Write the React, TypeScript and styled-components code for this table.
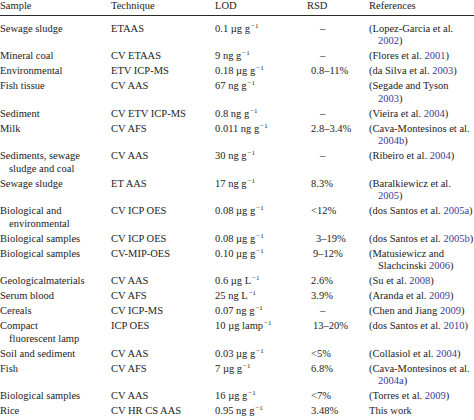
import React from "react";
import styled, { createGlobalStyle } from "styled-components";

type Ref = { pre: string; year?: string; post?: string };

interface RowData {
	sample: string[];
	technique: string;
	lod: string;
	unit: string;
	rsd: string;
	rsdIndent?: number;
	refs: Ref[];
}

const rows: RowData[] = [
	{ sample: ["Sewage sludge"], technique: "ETAAS", lod: "0.1 µg g", unit: "−1", rsd: "–", rsdIndent: 9, refs: [{ pre: "(Lopez-Garcia et al." }, { pre: "", year: "2002", post: ")" }] },
	{ sample: ["Mineral coal"], technique: "CV ETAAS", lod: "9 ng g", unit: "−1", rsd: "–", rsdIndent: 9, refs: [{ pre: "(Flores et al. ", year: "2001", post: ")" }] },
	{ sample: ["Environmental"], technique: "ETV ICP-MS", lod: "0.18 µg g", unit: "−1", rsd: "0.8–11%", refs: [{ pre: "(da Silva et al. ", year: "2003", post: ")" }] },
	{ sample: ["Fish tissue"], technique: "CV AAS", lod: "67 ng g", unit: "−1", rsd: "", refs: [{ pre: "(Segade and Tyson" }, { pre: "", year: "2003", post: ")" }] },
	{ sample: ["Sediment"], technique: "CV ETV ICP-MS", lod: "0.8 ng g", unit: "−1", rsd: "–", rsdIndent: 9, refs: [{ pre: "(Vieira et al. ", year: "2004", post: ")" }] },
	{ sample: ["Milk"], technique: "CV AFS", lod: "0.011 ng g", unit: "−1", rsd: "2.8–3.4%", refs: [{ pre: "(Cava-Montesinos et al." }, { pre: "", year: "2004b", post: ")" }] },
	{ sample: ["Sediments, sewage", "sludge and coal"], technique: "CV AAS", lod: "30 ng g", unit: "−1", rsd: "–", rsdIndent: 9, refs: [{ pre: "(Ribeiro et al. ", year: "2004", post: ")" }] },
	{ sample: ["Sewage sludge"], technique: "ET AAS", lod: "17 ng g", unit: "−1", rsd: "8.3%", refs: [{ pre: "(Baralkiewicz et al." }, { pre: "", year: "2005", post: ")" }] },
	{ sample: ["Biological and", "environmental"], technique: "CV ICP OES", lod: "0.08 µg g", unit: "−1", rsd: "<12%", refs: [{ pre: "(dos Santos et al. ", year: "2005a", post: ")" }] },
	{ sample: ["Biological samples"], technique: "CV ICP OES", lod: "0.08 µg g", unit: "−1", rsd: "3–19%", rsdIndent: 5, refs: [{ pre: "(dos Santos et al. ", year: "2005b", post: ")" }] },
	{ sample: ["Biological samples"], technique: "CV-MIP-OES", lod: "0.10 µg g", unit: "−1", rsd: "9–12%", rsdIndent: 2, refs: [{ pre: "(Matusiewicz and" }, { pre: "Slachcinski ", year: "2006", post: ")" }] },
	{ sample: ["Geologicalmaterials"], technique: "CV AAS", lod: "0.6 µg L", unit: "−1", rsd: "2.6%", refs: [{ pre: "(Su et al. ", year: "2008", post: ")" }] },
	{ sample: ["Serum blood"], technique: "CV AFS", lod: "25 ng L", unit: "−1", rsd: "3.9%", refs: [{ pre: "(Aranda et al. ", year: "2009", post: ")" }] },
	{ sample: ["Cereals"], technique: "CV ICP-MS", lod: "0.07 ng g", unit: "−1", rsd: "–", rsdIndent: 9, refs: [{ pre: "(Chen and Jiang ", year: "2009", post: ")" }] },
	{ sample: ["Compact", "fluorescent lamp"], technique: "ICP OES", lod: "10 µg lamp", unit: "−1", rsd: "13–20%", rsdIndent: 2, refs: [{ pre: "(dos Santos et al. ", year: "2010", post: ")" }] },
	{ sample: ["Soil and sediment"], technique: "CV AAS", lod: "0.03 µg g", unit: "−1", rsd: "<5%", refs: [{ pre: "(Collasiol et al. ", year: "2004", post: ")" }] },
	{ sample: ["Fish"], technique: "CV AFS", lod: "7 µg g", unit: "−1", rsd: "6.8%", refs: [{ pre: "(Cava-Montesinos et al." }, { pre: "", year: "2004a", post: ")" }] },
	{ sample: ["Biological samples"], technique: "CV AAS", lod: "16 µg g", unit: "−1", rsd: "<7%", refs: [{ pre: "(Torres et al. ", year: "2009", post: ")" }] },
	{ sample: ["Rice"], technique: "CV HR CS AAS", lod: "0.95 ng g", unit: "−1", rsd: "3.48%", refs: [{ pre: "This work" }] },
];

const App = () => {
	return (
		<>
			<GlobalStyle />
			<Page>
				<HeaderRow>
					<HeadCell>Sample</HeadCell>
					<HeadCell>Technique</HeadCell>
					<HeadCell>LOD</HeadCell>
					<HeadCell>RSD</HeadCell>
					<HeadCell>References</HeadCell>
				</HeaderRow>
				<Body>
					{rows.map((row, i) => (
						<Row key={i}>
							<Cell>
								{row.sample.map((line, j) => (
									<Line key={j} $cont={j > 0}>
										{line}
									</Line>
								))}
							</Cell>
							<Cell>{row.technique}</Cell>
							<Cell>
								{row.lod}
								<Sup>{row.unit}</Sup>
							</Cell>
							<RsdCell $indent={row.rsdIndent ?? 0}>{row.rsd}</RsdCell>
							<Cell>
								{row.refs.map((r, j) => (
									<Line key={j} $cont={j > 0}>
										{r.pre}
										{r.year && <Year>{r.year}</Year>}
										{r.post}
									</Line>
								))}
							</Cell>
						</Row>
					))}
				</Body>
			</Page>
		</>
	);
};

export default App;

const GlobalStyle = createGlobalStyle`
	html, body {
		margin: 0;
		padding: 0;
		background: #ffffff;
	}
	body {
		width: 474px;
		height: 420px;
		overflow: hidden;
	}
`;

const Page = styled.div`
	width: 474px;
	height: 420px;
	overflow: hidden;
	font-family: "Liberation Serif", "Times New Roman", serif;
	font-size: 10.5px;
	line-height: 12.5px;
	color: #232323;
`;

const columns = "111px 104px 92px 62px 105px";

const HeaderRow = styled.div`
	display: grid;
	grid-template-columns: ${columns};
	padding-bottom: 2px;
	border-bottom: 1.5px solid #2b2b2b;
`;

const HeadCell = styled.div`
	white-space: nowrap;
`;

const Body = styled.div`
	display: flex;
	flex-direction: column;
	padding-top: 6px;
`;

const Row = styled.div`
	display: grid;
	grid-template-columns: ${columns};
	padding: 1.25px 0;
`;

const Cell = styled.div`
	white-space: nowrap;
`;

const RsdCell = styled(Cell)<{ $indent: number }>`
	padding-left: ${({ $indent }) => 4 + $indent}px;
`;

const Line = styled.div<{ $cont: boolean }>`
	padding-left: ${({ $cont }) => ($cont ? 9 : 0)}px;
`;

const Year = styled.span`
	color: #3b3b96;
`;

const Sup = styled.sup`
	font-size: 7px;
	line-height: 0;
	vertical-align: 4px;
	margin-left: 1px;
`;
